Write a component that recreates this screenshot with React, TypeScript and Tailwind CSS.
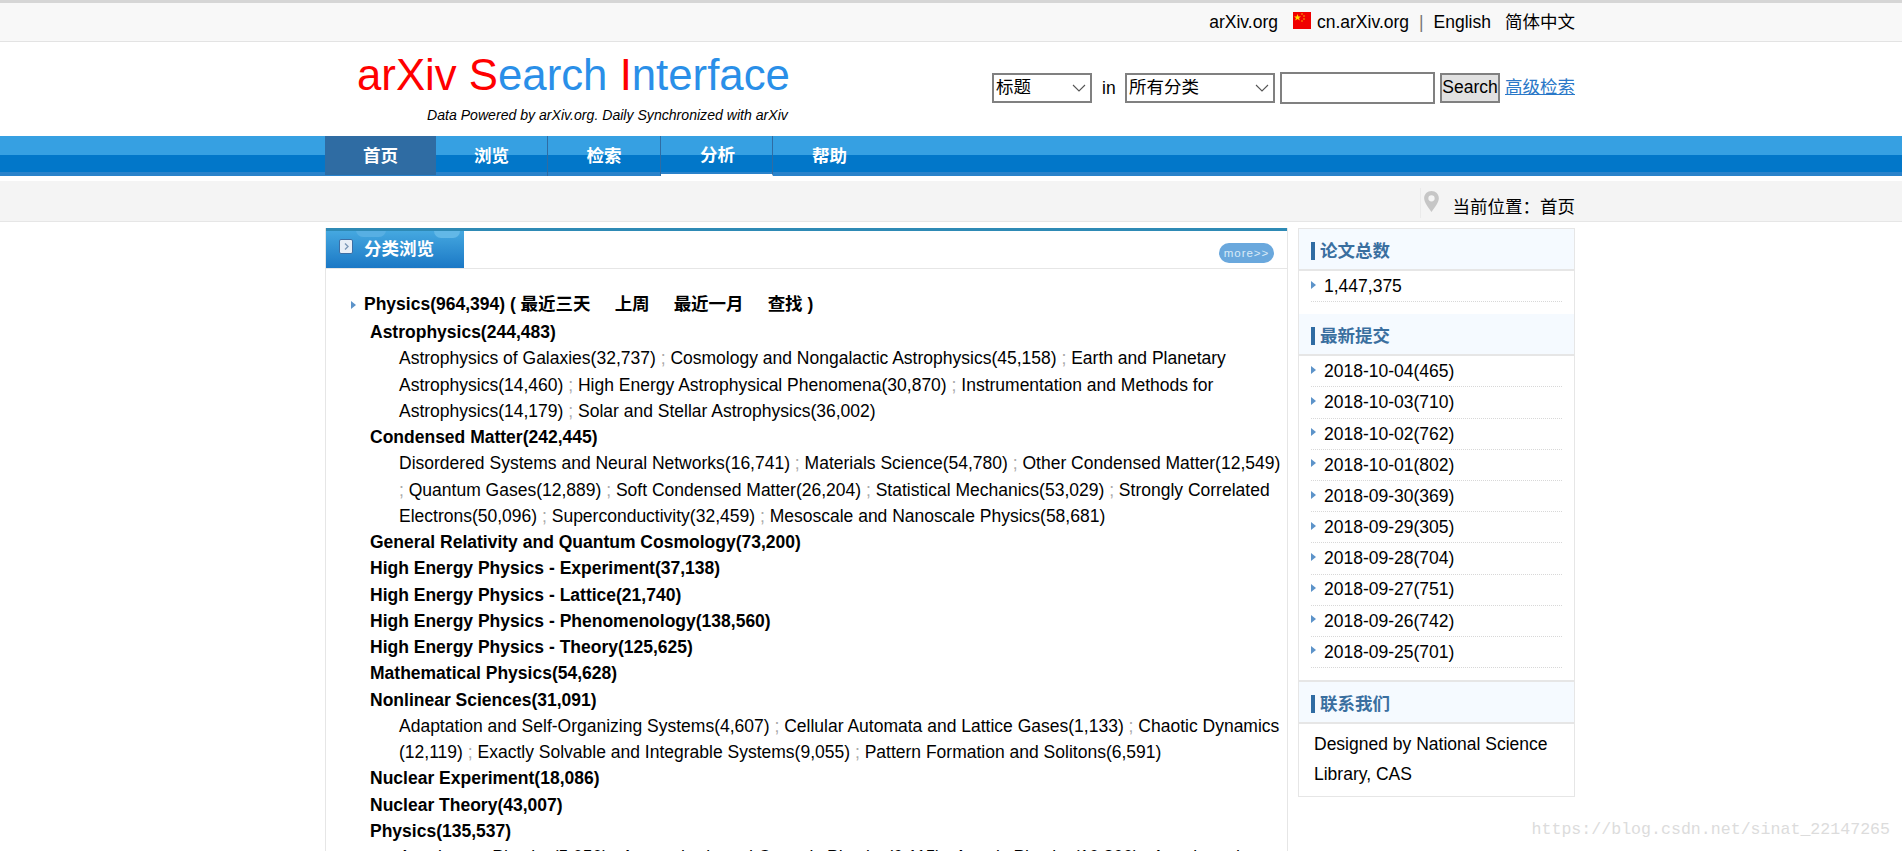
const SANS = "font-[family-name:'Liberation_Sans','Noto_Sans_CJK_SC',sans-serif]";

type Group = { name: string; subs?: string[] };

const groups: Group[] = [
  {
    name: "Astrophysics(244,483)",
    subs: [
      "Astrophysics of Galaxies(32,737)",
      "Cosmology and Nongalactic Astrophysics(45,158)",
      "Earth and Planetary Astrophysics(14,460)",
      "High Energy Astrophysical Phenomena(30,870)",
      "Instrumentation and Methods for Astrophysics(14,179)",
      "Solar and Stellar Astrophysics(36,002)",
    ],
  },
  {
    name: "Condensed Matter(242,445)",
    subs: [
      "Disordered Systems and Neural Networks(16,741)",
      "Materials Science(54,780)",
      "Other Condensed Matter(12,549)",
      "Quantum Gases(12,889)",
      "Soft Condensed Matter(26,204)",
      "Statistical Mechanics(53,029)",
      "Strongly Correlated Electrons(50,096)",
      "Superconductivity(32,459)",
      "Mesoscale and Nanoscale Physics(58,681)",
    ],
  },
  { name: "General Relativity and Quantum Cosmology(73,200)" },
  { name: "High Energy Physics - Experiment(37,138)" },
  { name: "High Energy Physics - Lattice(21,740)" },
  { name: "High Energy Physics - Phenomenology(138,560)" },
  { name: "High Energy Physics - Theory(125,625)" },
  { name: "Mathematical Physics(54,628)" },
  {
    name: "Nonlinear Sciences(31,091)",
    subs: [
      "Adaptation and Self-Organizing Systems(4,607)",
      "Cellular Automata and Lattice Gases(1,133)",
      "Chaotic Dynamics (12,119)",
      "Exactly Solvable and Integrable Systems(9,055)",
      "Pattern Formation and Solitons(6,591)",
    ],
  },
  { name: "Nuclear Experiment(18,086)" },
  { name: "Nuclear Theory(43,007)" },
  {
    name: "Physics(135,537)",
    subs: [
      "Accelerator Physics(5,050)",
      "Atmospheric and Oceanic Physics(6,115)",
      "Atomic Physics(10,800)",
      "Atomic and Molecular Clusters(2,214)",
    ],
  },
];

const dates = [
  "2018-10-04(465)",
  "2018-10-03(710)",
  "2018-10-02(762)",
  "2018-10-01(802)",
  "2018-09-30(369)",
  "2018-09-29(305)",
  "2018-09-28(704)",
  "2018-09-27(751)",
  "2018-09-26(742)",
  "2018-09-25(701)",
];

function Arrow({ className = "" }: { className?: string }) {
  return (
    <svg width="5" height="8" viewBox="0 0 5 8" className={className}>
      <path d="M0 0 L5 4 L0 8 Z" fill="#5c93c9" />
    </svg>
  );
}

function Chevron() {
  return (
    <svg width="14" height="8" viewBox="0 0 14 8" className="absolute right-[6px] top-[11px] pointer-events-none">
      <path d="M1 1 L7 7 L13 1" fill="none" stroke="#555" strokeWidth="1.1" />
    </svg>
  );
}

function Flag() {
  return (
    <svg width="18" height="17" viewBox="0 0 18 17" className="block">
      <rect width="18" height="17" fill="#f00000" />
      <path d="M4.5 2 L5.4 4.5 L8 4.5 L6 6 L6.8 8.5 L4.5 7 L2.2 8.5 L3 6 L1 4.5 L3.6 4.5 Z" fill="#ffde00" />
      <circle cx="9" cy="2" r="0.7" fill="#ffde00" />
      <circle cx="11" cy="4" r="0.7" fill="#ffde00" />
      <circle cx="11" cy="7" r="0.7" fill="#ffde00" />
      <circle cx="9" cy="9" r="0.7" fill="#ffde00" />
    </svg>
  );
}

function SideHead({ title }: { title: string }) {
  return (
    <div className="h-[42px] bg-[#f5faff] border-b-2 border-[#e6e6e6] flex items-center pl-[12px] pt-[4px]">
      <span className="w-[4px] h-[18px] bg-[#2f6ca3] mr-[5px]" />
      <span className="text-[17.5px] font-bold text-[#3a6f9f]">{title}</span>
    </div>
  );
}

function SideRow({ text, pad }: { text: string; pad: string }) {
  return (
    <div className="mx-[12px] h-[31.2px] border-b border-dotted border-[#d8d8d8] flex items-center">
      <Arrow className="mb-[3px]" />
      <span className={`${pad} text-[17.5px] text-black`}>{text}</span>
    </div>
  );
}

export default function App() {
  return (
    <div className={`${SANS} relative h-[851px] overflow-hidden bg-white text-black`}>
      {/* top bar */}
      <div className="h-[42px] border-t-[3px] border-b border-t-[#d6d6d6] border-b-[#e3e3e3] bg-[#f8f8f8]">
        <div className="mx-auto w-[1252px] h-full flex items-center justify-end text-[17.5px] pr-[2px] pt-[1px]">
          <span>arXiv.org</span>
          <span className="ml-[15px] mr-[6px] mb-[4px]"><Flag /></span>
          <span>cn.arXiv.org</span>
          <span className="mx-[10px] text-[#777]">|</span>
          <span>English</span>
          <span className="ml-[14px]">简体中文</span>
        </div>
      </div>

      {/* header */}
      <div className="h-[94px] bg-white">
        <div className="mx-auto w-[1252px] h-full flex justify-between pl-[32px] pr-[2px]">
          <div className="relative w-[436px]">
            <div className="mt-[7px] text-[43.75px] leading-[52px] text-[#2a8fe8] whitespace-nowrap">
              <span className="text-[#ff0000]">arXiv S</span>earch <span className="text-[#ff0000]">I</span>nterface
            </div>
            <div className="mt-[6px] ml-[70px] text-[14.1px] leading-[16px] italic whitespace-nowrap">
              Data Powered by arXiv.org. Daily Synchronized with arXiv
            </div>
          </div>
          <div className="flex items-start pt-[31px] text-[17.5px]">
            <div className="relative w-[100px] h-[30px]">
              <select defaultValue="标题" className="appearance-none w-full h-full border-2 border-[#808080] bg-white pl-[2px] text-[17.5px] leading-none outline-none">
                <option>标题</option>
              </select>
              <Chevron />
            </div>
            <span className="ml-[10px] w-[23px] leading-[30px]">in</span>
            <div className="relative w-[150px] h-[30px]">
              <select defaultValue="所有分类" className="appearance-none w-full h-full border-2 border-[#808080] bg-white pl-[2px] text-[17.5px] leading-none outline-none">
                <option>所有分类</option>
              </select>
              <Chevron />
            </div>
            <input className="ml-[5px] -mt-[1px] w-[155px] h-[32px] border-2 border-[#808080] bg-white outline-none" />
            <button className="ml-[5px] w-[60px] h-[30px] border-2 border-[#808080] bg-[#e1e1e1] text-[17.5px] leading-none">Search</button>
            <a className="ml-[5px] leading-[28px] text-[#2a78c8] underline">高级检索</a>
          </div>
        </div>
      </div>

      {/* nav */}
      <div className="h-[40px] bg-[linear-gradient(to_bottom,#36a0e2_0,#36a0e2_19px,#0277c9_19px,#0277c9_36px,#2a83cb_36px,#2a83cb_40px)]">
        <div className="mx-auto w-[1252px] h-full flex text-white font-bold text-[17.5px]">
          <div className="w-[111px] h-[39px] bg-[#2f6ca3] flex items-center justify-center pt-[1px]">首页</div>
          <div className="w-[112px] border-r border-[#2f6ca3] flex items-center justify-center pt-[1px]">浏览</div>
          <div className="w-[113px] border-r border-[#2f6ca3] flex items-center justify-center pt-[1px]">检索</div>
          <div className="w-[112px] border-r border-[#2f6ca3] border-b-2 border-b-white flex items-center justify-center pt-[1px] pl-[2px]">分析</div>
          <div className="w-[113px] flex items-center justify-center pt-[1px]">帮助</div>
        </div>
      </div>

      {/* breadcrumb */}
      <div className="mt-[5px] h-[41px] bg-[#f4f4f4] border-b border-[#e6e6e6]">
        <div className="mx-auto w-[1252px] h-full flex justify-end items-start pr-[2px]">
          <div className="mt-[7px] h-[30px] w-px bg-[#eaeaea]" />
          <svg width="15" height="21" viewBox="0 0 14 20" className="ml-[3px] mt-[10px]">
            <path fillRule="evenodd" d="M7 0 C3 0 0 3 0 7 C0 11 4 16 7 20 C10 16 14 11 14 7 C14 3 11 0 7 0 Z M7 4 A3 3 0 1 1 7 10 A3 3 0 1 1 7 4 Z" fill="#c6c6c6" />
          </svg>
          <span className="ml-[14px] mt-[16px] text-[17.5px] leading-[20px] whitespace-nowrap">当前位置：首页</span>
        </div>
      </div>

      {/* main */}
      <div className="mx-auto mt-[6px] w-[1252px] flex items-start">
        <div className="w-[963px] shrink-0 border-x border-[#e6e6e6] h-[700px]">
          <div className="h-[41px] border-t-[3px] border-[#2e8ab5] relative">
            <div className="h-[38px] border-b border-[#e6e6e6] flex items-start justify-between pr-[13px]">
              <div className="relative w-[138px] h-[37px] bg-[linear-gradient(to_bottom,#45a8e0,#1b78c5)] flex items-center pl-[13px] overflow-hidden">
                <span className="absolute left-[30px] -top-[8px] w-[30px] h-[14px] rounded-full bg-[#57afe3]" />
                <span className="absolute right-[4px] -top-[7px] w-[26px] h-[14px] rounded-full bg-[#62b8e7]" />
                <span className="relative -mt-[6px] w-[14px] h-[15px] rounded-[2px] bg-[#e8eff7] border border-[#3b6ea5] flex items-center justify-center">
                  <svg width="5" height="7" viewBox="0 0 5 7"><path d="M1 0.5 L4 3.5 L1 6.5" fill="none" stroke="#7c99b8" strokeWidth="1.4" /></svg>
                </span>
                <span className="relative ml-[11px] text-white font-bold text-[17.5px]">分类浏览</span>
              </div>
              <span className="mt-[12px] w-[55px] h-[20px] rounded-full bg-[#6aa8dd] text-[#d9ebf8] text-[11.5px] tracking-[1px] leading-[20px] text-center">more&gt;&gt;</span>
            </div>
          </div>
          <div className="pt-[21px] text-[17.5px] leading-[26.25px]">
            <div className="flex items-center pl-[25px] h-[29px] font-bold whitespace-pre">
              <Arrow className="mr-[8px]" />
              <span>Physics(964,394) ( 最近三天</span>
              <span className="ml-[24px]">上周</span>
              <span className="ml-[24px]">最近一月</span>
              <span className="ml-[24px]">查找 )</span>
            </div>
            {groups.map((g) => (
              <div key={g.name}>
                <div className="pl-[44px] font-bold">{g.name}</div>
                {g.subs && (
                  <div className="pl-[73px] pr-[4px]">
                    {g.subs.map((s, i) => (
                      <span key={s}>
                        {s}
                        {i < g.subs!.length - 1 && <span className="text-[#aaaaaa]"> ; </span>}
                      </span>
                    ))}
                  </div>
                )}
              </div>
            ))}
          </div>
        </div>

        <div className="ml-[10px] w-[277px] shrink-0 border border-[#e6e6e6] h-[569px]">
          <SideHead title="论文总数" />
          <SideRow text="1,447,375" pad="ml-[8px]" />
          <div className="h-[12px]" />
          <SideHead title="最新提交" />
          {dates.map((d) => (
            <SideRow key={d} text={d} pad="ml-[8px]" />
          ))}
          <div className="h-[14px] border-b-2 border-[#e6e6e6]" />
          <SideHead title="联系我们" />
          <div className="px-[15px] pt-[5px] text-[17.5px] leading-[30px]">
            Designed by National Science Library, CAS
          </div>
        </div>
      </div>

      {/* watermark */}
      <div className="absolute right-[12px] top-[820px] font-[family-name:'Liberation_Mono',monospace] text-[16.6px] leading-[20px] text-[#dcdcdc]">
        https://blog.csdn.net/sinat_22147265
      </div>
    </div>
  );
}
